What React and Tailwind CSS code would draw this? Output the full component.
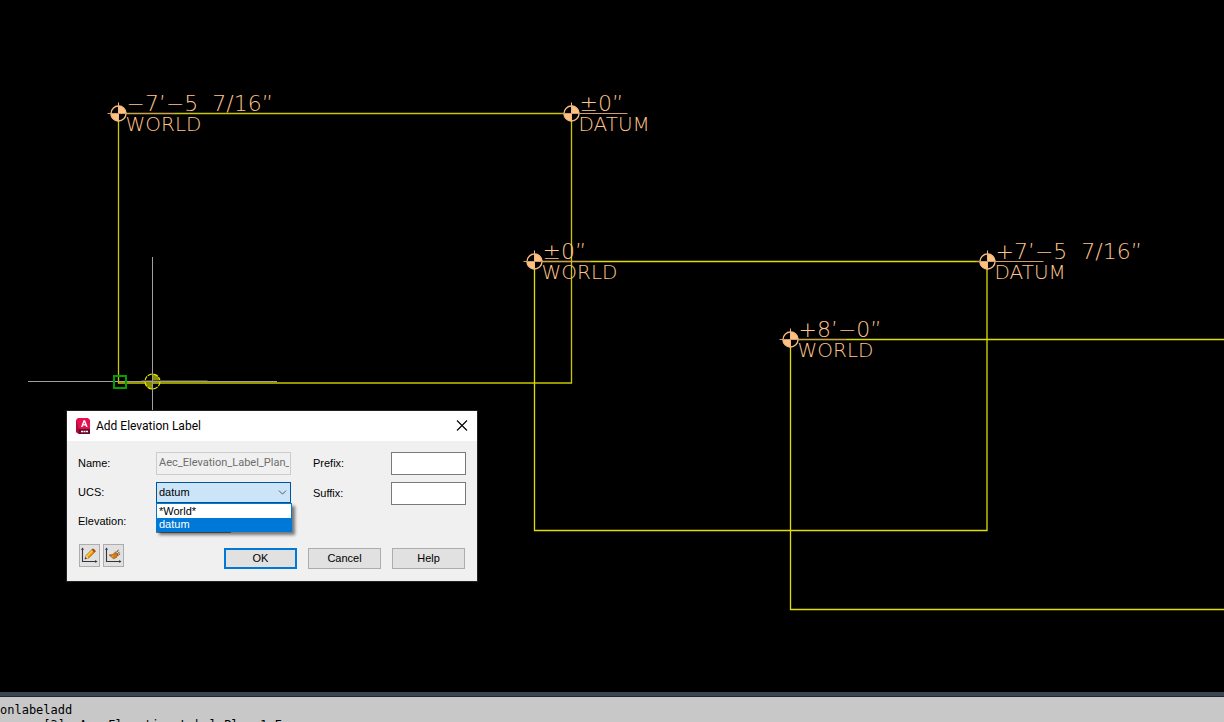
import React, { useState } from "react";
import { ChevronDown } from "lucide-react";

const ucsOptions = ["*World*", "datum"];

const elevationLabels = [
  { x: 118.5, y: 113.5, elevation: "−7’−5  7/16”", ucs: "WORLD" },
  { x: 571.5, y: 113.5, elevation: "±0”", ucs: "DATUM" },
  { x: 534.5, y: 261.5, elevation: "±0”", ucs: "WORLD" },
  { x: 987.5, y: 261.5, elevation: "+7’−5  7/16”", ucs: "DATUM" },
  { x: 790.5, y: 339.5, elevation: "+8’−0”", ucs: "WORLD" },
];

const ElevationLabel = ({ x, y, elevation, ucs }) => (
  <g transform={`translate(${x} ${y})`} className="stroke-[#f0b882]">
    <circle r="7.5" fill="black" strokeWidth="1.4" />
    <path d="M0 0V-7.5A7.5 7.5 0 0 1 7.5 0ZM0 0V7.5A7.5 7.5 0 0 1 -7.5 0Z" className="fill-[#ffc080]" />
    <path d="M0 -11V8" />
    <path d="M-11 0H56" className="stroke-[#cf9d68]" />
    <g className="fill-[#ffc48c] stroke-none font-extralight">
      <text x="8" y="-3" className="whitespace-pre text-[22px]">{elevation}</text>
      <text x="7" y="17" className="text-[20px]">{ucs}</text>
    </g>
  </g>
);

const Drawing = () => (
  <svg
    width="100%"
    height="100%"
    className="absolute inset-0 font-['DejaVu_Sans',sans-serif]"
    fill="none"
  >
    {/* Slab outlines */}
    <g strokeWidth="1.3">
      <path d="M118.5 113.5H571.5V383H118.5Z" className="stroke-[#c8c800]" />
      <path d="M534.5 261.5H987V530.5H534.5Z" className="stroke-[#dede00]" />
      <path d="M4000 339.5H790.5V609.5H4000" className="stroke-[#dede00]" />
    </g>

    {elevationLabels.map((label) => (
      <ElevationLabel key={`${label.x}-${label.y}`} {...label} />
    ))}

    <g transform="translate(152.5 381.5)">
      <path d="M0 0V-7.5A7.5 7.5 0 0 1 7.5 0ZM0 0V7.5A7.5 7.5 0 0 1 -7.5 0Z" className="fill-[#8c8c00]" />
      <circle r="7.5" strokeWidth="1.2" strokeDasharray="5 1" className="stroke-[#e6e600]" />
      <path d="M-11 -1H55M0 -11V11" className="stroke-[#4c4c00]" />
    </g>

    {/* Crosshair */}
    <path d="M28 381.5H277M152.5 257V420" className="stroke-[#a0a0a0]" />
    {/* Endpoint snap marker */}
    <rect x="114" y="376" width="12" height="12" strokeWidth="2" className="stroke-[#00a000]" />
  </svg>
);

const AppLogo = () => (
  <svg width="15" height="16" viewBox="0 0 15 16" aria-hidden="true">
    <path d="M2 0H12L14 2V16H3L0 14V2Z" fill="#e4104f" />
    <path d="M0 2L3 11V16L0 14Z" fill="#a80c3c" />
    <path d="M3 11H14V16H3Z" fill="#6b0a2c" />
    <path d="M7.5 2.2L5 9H6.5L7 7.4H9.6L10.1 9H11.7L9.1 2.2ZM8.3 4.2L9.1 6.3H7.5Z" fill="white" />
    <path d="M5 13.5H12" stroke="white" strokeWidth="1.4" strokeDasharray="2 .5" />
  </svg>
);

const AxesIcon = ({ children }) => (
  <svg width="19" height="21" viewBox="0 0 19 21" aria-hidden="true">
    <path d="M2.5 4V16.5H16" fill="none" stroke="#33333d" strokeWidth="1.1" />
    <path d="M2.5 2.5L4 4.8H1ZM17.5 16.5L15.2 15V18Z" fill="#33333d" />
    {children}
  </svg>
);

const PencilIcon = () => (
  <AxesIcon>
    <path d="M5 14L6 10.5L12.5 4L15.5 6.5L8.5 13.2Z" fill="#ffc928" stroke="#6b4a20" strokeWidth=".6" />
    <path d="M7.5 12L14 5.5L15.5 6.5L8.5 13.2Z" fill="#e08a10" />
    <path d="M11.7 4.8L13 3.4L15.6 5.6L14.3 7.4Z" fill="#b5401c" />
    <path d="M6 10.5L8.5 13.2L5 14Z" fill="#f4dcae" />
    <path d="M4.8 14.2L5.6 11.8L7 13.5Z" fill="#333" />
  </AxesIcon>
);

const BrushIcon = () => (
  <AxesIcon>
    <path d="M5 10L8.5 9.5L11 7.5L14 9.5L12.5 12.5L9.5 13.8Z" fill="#d07a18" stroke="#99500c" strokeWidth=".6" />
    <path d="M11.5 7.5L15 5M12.8 9L16 7M13.5 10.5L16 9" fill="none" stroke="#7a3c10" strokeWidth="1.1" strokeDasharray="1.2 .6" />
    <path d="M7 11L10 10.5L9 12Z" fill="#f0a848" />
  </AxesIcon>
);

const textBox = "h-[23px] border border-[#7a7a7a] bg-white px-0.5 outline-none";
const actionButton = "h-[21px] w-[73px] bg-[#e1e1e1]";
const iconButton = "flex h-[23px] w-[21px] items-center justify-center border border-[#adadad] bg-[#e1e1e1]";

const AddElevationLabelDialog = ({ onClose }) => {
  const [ucs, setUcs] = useState("datum");
  const [isListOpen, setIsListOpen] = useState(true);
  const [elevation, setElevation] = useState("");
  const [prefix, setPrefix] = useState("");
  const [suffix, setSuffix] = useState("");

  const handlePick = (option) => {
    setUcs(option);
    setIsListOpen(false);
  };

  return (
    <div
      role="dialog"
      aria-labelledby="dialog-title"
      className="absolute left-[67px] top-[411px] w-[410px] bg-[#f0f0f0] font-['Liberation_Sans',Arial,sans-serif] text-[11px] leading-[13px] text-black ring-1 ring-[#222]"
    >
      {/* Title bar */}
      <div className="flex h-[30px] items-center bg-white pl-[9px] pr-[9px]">
        <AppLogo />
        <h1 id="dialog-title" className="ml-[5px] flex-1 font-[Roboto,sans-serif] text-[12px]">
          Add Elevation Label
        </h1>
        <button type="button" aria-label="Close" onClick={onClose}>
          <svg width="12" height="12" viewBox="0 0 12 12" aria-hidden="true">
            <path d="M1 .5L11 10.5M11 .5L1 10.5" stroke="black" strokeWidth="1.1" />
          </svg>
        </button>
      </div>

      <form onSubmit={(e) => e.preventDefault()} className="px-[11px] pb-3 pt-[11px]">
        <div className="flex justify-between">
          <div className="grid grid-cols-[78px_135px] items-center gap-y-1.5">
            <label htmlFor="name">Name:</label>
            <input
              id="name"
              type="text"
              disabled
              defaultValue="Aec_Elevation_Label_Plan_1"
              className="h-[23px] border border-[#cccccc] bg-[#f0f0f0] pb-0.5 pl-0.5 pr-px font-[Roboto,sans-serif] text-[#6d6d6d]"
            />

            <label htmlFor="ucs">UCS:</label>
            <div className="flex h-[23px] items-center">
              <div className="relative w-full">
                <select
                  id="ucs"
                  value={ucs}
                  onChange={(e) => setUcs(e.target.value)}
                  className="block h-[21px] w-full appearance-none border border-[#005499] bg-[#cce4f7] pl-0.5 outline-none"
                >
                  {ucsOptions.map((option) => (
                    <option key={option}>{option}</option>
                  ))}
                </select>
                <ChevronDown
                  size={13}
                  strokeWidth={1.6}
                  className="pointer-events-none absolute right-0.5 top-1 text-[#444]"
                />
                {isListOpen && (
                  <ul className="absolute left-0 top-full z-10 w-[136px] border border-[#0078d7] bg-white pt-px shadow-[3px_3px_3px_rgba(0,0,0,0.5)]">
                    {ucsOptions.map((option) => (
                      <li
                        key={option}
                        onClick={() => handlePick(option)}
                        className={`px-0.5 ${option === ucs ? "bg-[#0078d7] text-white" : ""}`}
                      >
                        {option}
                      </li>
                    ))}
                  </ul>
                )}
              </div>
            </div>

            <label htmlFor="elevation">Elevation:</label>
            <input
              id="elevation"
              type="text"
              value={elevation}
              onChange={(e) => setElevation(e.target.value)}
              className={`${textBox} w-[75px]`}
            />
          </div>

          <div className="grid grid-cols-[78px_75px] content-start items-center gap-y-[7px]">
            <label htmlFor="prefix">Prefix:</label>
            <input id="prefix" type="text" value={prefix} onChange={(e) => setPrefix(e.target.value)} className={textBox} />
            <label htmlFor="suffix">Suffix:</label>
            <input id="suffix" type="text" value={suffix} onChange={(e) => setSuffix(e.target.value)} className={textBox} />
          </div>
        </div>

        <div className="mt-[11px] flex items-end justify-between px-px">
          <div className="mb-0.5 flex gap-[3px]">
            <button type="button" aria-label="Pick point" className={iconButton}>
              <PencilIcon />
            </button>
            <button type="button" aria-label="Match properties" className={iconButton}>
              <BrushIcon />
            </button>
          </div>
          <div className="flex gap-[11px]">
            <button type="submit" className={`${actionButton} border-2 border-[#0078d7]`}>OK</button>
            <button type="button" onClick={onClose} className={`${actionButton} border border-[#adadad]`}>
              Cancel
            </button>
            <button type="button" className={`${actionButton} border border-[#adadad]`}>Help</button>
          </div>
        </div>
      </form>
    </div>
  );
};

const App = () => {
  const [isDialogOpen, setIsDialogOpen] = useState(true);

  return (
    <div className="flex h-screen flex-col overflow-hidden bg-black">
      <main className="relative flex-1 overflow-hidden">
        <Drawing />
        {isDialogOpen && <AddElevationLabelDialog onClose={() => setIsDialogOpen(false)} />}
      </main>

      {/* Command line history */}
      <footer className="h-[30px] overflow-hidden border-t-4 border-[#3b4453] bg-[#c8c8c8]">
        <div className="whitespace-pre border-t border-[#20252e] pt-1.5 font-['DejaVu_Sans_Mono',monospace] text-[12px] leading-[15px] text-black">
          <p>onlabeladd</p>
          <p>{"      [3]: Aec_Elevation_Label_Plan_1_F"}</p>
        </div>
      </footer>
    </div>
  );
};

export default App;
